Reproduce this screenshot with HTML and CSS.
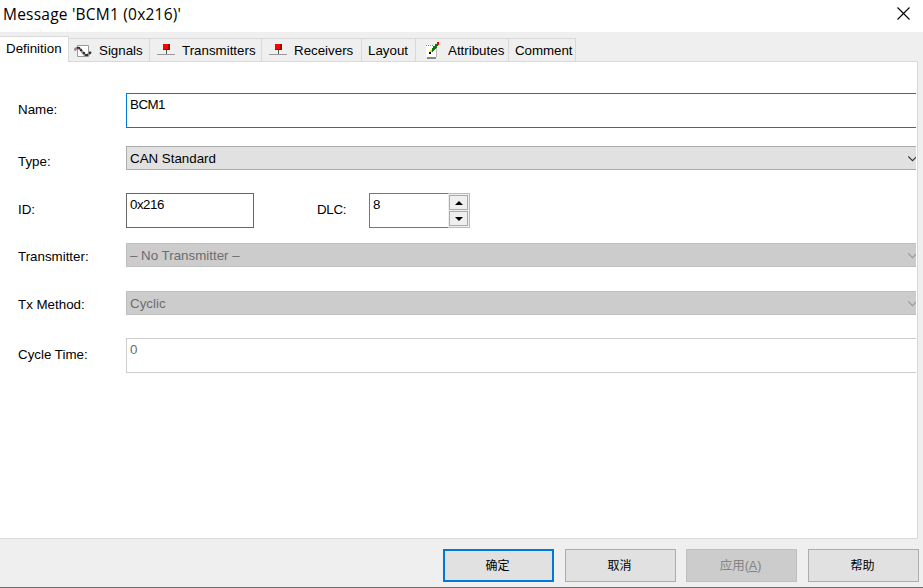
FILE: index.html
```html
<!DOCTYPE html>
<html lang="zh-CN">
<head>
<meta charset="utf-8">
<title>Message 'BCM1 (0x216)'</title>
<link rel="stylesheet" href="styles.css">
</head>
<body>
<div class="dialog">
  <header class="titlebar">
    <span class="title">Message 'BCM1 (0x216)'</span>
    <svg class="close" width="13" height="13" viewBox="0 0 13 13"><path d="M.5 .5l12 12M12.5 .5l-12 12" stroke="#000" stroke-width="1.1"/></svg>
  </header>
  <nav class="tabs">
    <div class="tab active">Definition</div>
    <div class="tab signals">
      <svg width="18" height="14" viewBox="0 0 18 14"><path d="M3.500 1.500h11v11h-11z" fill="#fff" stroke="#999"/><path d="M.5 6.500C2 3.500 4.500 3 6.500 5.500L9.500 9.500C11.500 12.500 14 12 17 7.500" fill="none" stroke="#8a8a8a" stroke-width="2.600"/><path d="M3 3h3v2H3zM6 5h2v2H6zM9 8h2v2H9zM11 10h3v2h-3zM15 8h2v2h-2z" fill="#333"/><path d="M3 4h2v1H3z" fill="#7a2868"/></svg>
      <span>Signals</span>
    </div>
    <div class="tab transmitters">
      <svg width="18" height="12" viewBox="0 0 18 12" shape-rendering="crispEdges"><path d="M6 0h7v6H6z" fill="#a00000"/><path d="M6 0h5v5H6z" fill="#f00"/><path d="M9 6h1v4H9z" fill="#555"/><path d="M0 10h18v1H0z" fill="#999"/></svg>
      <span>Transmitters</span>
    </div>
    <div class="tab receivers">
      <svg width="18" height="12" viewBox="0 0 18 12" shape-rendering="crispEdges"><path d="M6 0h7v6H6z" fill="#a00000"/><path d="M6 0h5v5H6z" fill="#f00"/><path d="M9 6h1v4H9z" fill="#555"/><path d="M0 10h18v1H0z" fill="#999"/></svg>
      <span>Receivers</span>
    </div>
    <div class="tab layout">Layout</div>
    <div class="tab attributes">
      <svg width="14" height="17" viewBox="0 0 14 17" shape-rendering="crispEdges"><path d="M0 3h11v12H0z" fill="#fff"/><path d="M0 3.500h7" stroke="#888" stroke-dasharray="1 1"/><path d="M10 5h1v10h-1z" fill="#bbb"/><path d="M1 15h9v2H1z" fill="#888"/><path d="M11 0h2v3h-2z" fill="#f00"/><path d="M9 2h2v1h1v1h-1v2h-1v1H9v1H8v1H7v1H5V8h1V6h1V4h2z" fill="#087808"/><path d="M4 8h2v2H4z" fill="#e0d800"/><path d="M3 10h2v2H3z" fill="#000"/></svg>
      <span>Attributes</span>
    </div>
    <div class="tab comment">Comment</div>
  </nav>
  <main class="pane">
    <div class="row name"><label>Name:</label><div class="field focus num">BCM1</div></div>
    <div class="row type"><label>Type:</label><div class="field combo"><span>CAN Standard</span><svg width="8" height="6" viewBox="0 0 8 6"><path d="M.3 .5l4.200 4.200L8.700 .5" fill="none" stroke="#333" stroke-width="1.100"/></svg></div></div>
    <div class="row ident">
      <label>ID:</label><div class="field id num">0x216</div>
      <label class="dlc-label">DLC:</label>
      <div class="field dlc"><span>8</span>
        <div class="spin">
          <div class="step"><svg width="8" height="4" viewBox="0 0 8 4"><path d="M0 4L4 0l4 4z"/></svg></div>
          <div class="step"><svg width="8" height="4" viewBox="0 0 8 4"><path d="M0 0l4 4 4-4z"/></svg></div>
        </div>
      </div>
    </div>
    <div class="row transmitter"><label>Transmitter:</label><div class="field combo disabled"><span>– No Transmitter –</span><svg width="8" height="6" viewBox="0 0 8 6"><path d="M.3 .5l4.200 4.200L8.700 .5" fill="none" stroke="#999" stroke-width="1.100"/></svg></div></div>
    <div class="row method"><label>Tx Method:</label><div class="field combo disabled"><span>Cyclic</span><svg width="8" height="6" viewBox="0 0 8 6"><path d="M.3 .5l4.200 4.200L8.700 .5" fill="none" stroke="#999" stroke-width="1.100"/></svg></div></div>
    <div class="row cycle"><label>Cycle Time:</label><div class="field readonly">0</div></div>
  </main>
  <footer class="actions">
    <div class="button primary">确定</div>
    <div class="button">取消</div>
    <div class="button off">应用(<u>A</u>)</div>
    <div class="button last">帮助</div>
  </footer>
</div>
</body>
</html>
```
FILE: styles.css
```css
* { box-sizing: border-box; }
body { margin: 0; background: #efefef; color: #000; font: 13.33px/16px "Liberation Sans", "Noto Sans CJK SC", sans-serif; }
svg { display: block; flex: none; }
.dialog { display: flex; flex-direction: column; width: 923px; height: 588px; overflow: hidden; white-space: nowrap; border-bottom: 1px solid #6b6b6b; }
.titlebar { display: flex; justify-content: space-between; height: 32px; background: #fff; padding: 3px 13px 0 3px; }
.title { font: 15.5px/22px "Open Sans", "Noto Sans", sans-serif; letter-spacing: .22px; }
.close { margin-top: 4px; }
.tabs { display: flex; align-items: flex-end; height: 30px; flex: none; }
.tab { display: flex; align-items: center; height: 24px; border: 1px solid #d9d9d9; border-left: 0; padding-top: 2px; }
.tab.active { width: 69px; height: 26px; background: #fff; border-bottom: 0; padding: 0 0 1px 6px; }
.signals { width: 81px; padding-left: 5px; }
.signals svg { margin-bottom: 1px; }
.signals span { margin-left: 7px; }
.transmitters { width: 112px; padding-left: 7px; }
.transmitters span, .receivers span { margin-left: 7px; }
.transmitters svg, .receivers svg { margin-bottom: 2px; }
.receivers { width: 100px; padding-left: 7px; }
.layout { width: 54px; padding-left: 6px; }
.attributes { width: 93px; padding-left: 10px; }
.attributes svg { margin-bottom: 1px; }
.attributes span { margin-left: 8px; }
.comment { width: 67px; padding-left: 6px; letter-spacing: -.05px; }
.tabs::after { content: ""; flex: 1; height: 1px; margin-right: 5px; background: #d9d9d9; }
.pane { width: 918px; height: 477px; flex: none; background: #fff; border: solid #d9d9d9; border-width: 0 1px 1px 0; padding: 31px 1px 0 18px; }
.row { display: flex; align-items: flex-start; }
.row label { width: 108px; flex: none; padding-top: 9px; }
.field { flex: 1; height: 35px; border: 1px solid #666; border-right: 0; padding: 3px 0 0 3px; background: #fff; }
.focus { border-color: #0078d7; }
.num { letter-spacing: -.5px; }
.combo { display: flex; justify-content: space-between; height: 24px; background: #e1e1e1; border-color: #adadad; padding-top: 4px; }
.combo svg { margin-top: 5px; }
.combo.disabled { color: #6d6d6d; background: #ccc; border-color: #bfbfbf; }
.type { margin-top: 18px; height: 24px; }
.row.type label { padding-top: 8px; }
.ident { margin-top: 23px; }
.id { flex: none; width: 128px; border-right: 1px solid #666; }
.row .dlc-label { width: 52px; margin-left: 63px; letter-spacing: -.3px; }
.dlc { flex: none; width: 101px; display: flex; justify-content: space-between; border: 1px solid #777; padding: 0 0 0 3px; }
.dlc > span { padding-top: 3px; }
.spin { width: 22px; height: 35px; margin: -1px -1px 0 0; background: #efefef; border: 1px solid #bbb; border-left: 0; display: flex; flex-direction: column; gap: 1px; padding: 1px; }
.step { flex: 1; border: 1px solid #aaa; display: flex; align-items: center; justify-content: center; }
.transmitter { margin-top: 15px; }
.row.transmitter label, .row.method label { padding-top: 6px; }
.method { margin-top: 24px; }
.cycle { margin-top: 23px; }
.readonly { color: #6d6d6d; border-color: #ccc; }
.actions { display: flex; padding: 10px 0 0 443px; }
.button { width: 111px; height: 33px; margin-right: 11px; flex: none; display: flex; align-items: center; justify-content: center; font: 12px/16px "Liberation Sans", "Noto Sans CJK SC", sans-serif; background: #e1e1e1; border: 1px solid #adadad; padding: 1px 2px 0 0; }
.button.primary { border: 2px solid #0078d7; }
.button:nth-child(2) { margin-right: 10px; }
.button.off { color: #838383; background: #ccc; border-color: #bfbfbf; font-size: 12.5px; }
.button.last { margin-right: 0; }
```
